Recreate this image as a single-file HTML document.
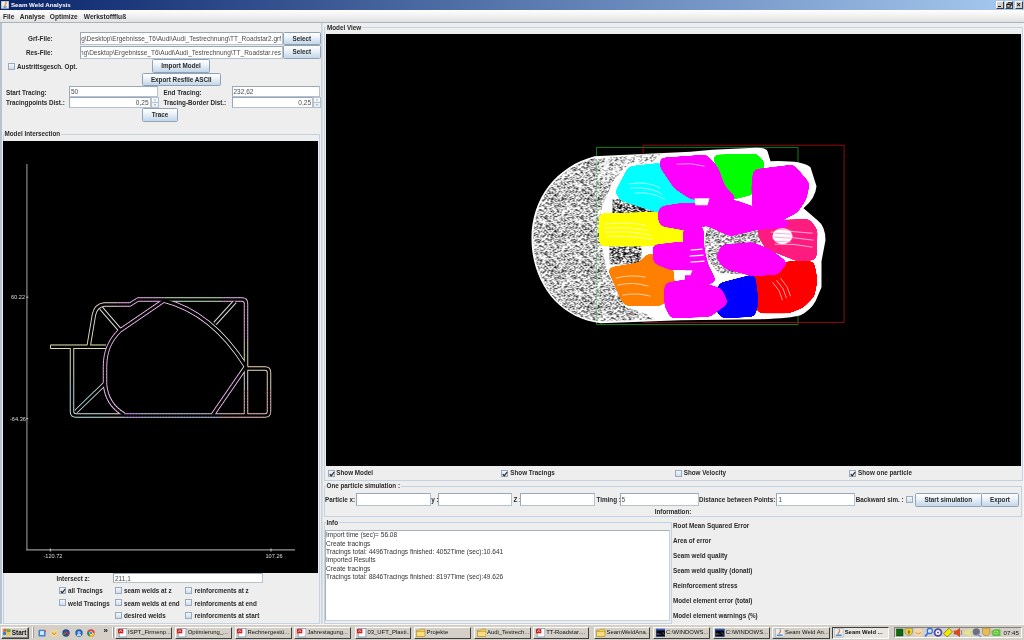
<!DOCTYPE html>
<html><head><meta charset="utf-8">
<style>
*{margin:0;padding:0;box-sizing:border-box}
html,body{width:1024px;height:640px;overflow:hidden;background:#eeeeee;font-family:"Liberation Sans",sans-serif;color:#222}
.a{position:absolute}
.b{font-weight:bold;font-size:6.3px;line-height:8px;white-space:nowrap;color:#2a2a2a;margin-top:0.5px}
.r{font-size:6.3px;line-height:8px;white-space:nowrap;color:#333}
.btn{position:absolute;border:1px solid #8ea2b8;border-radius:1.5px;background:linear-gradient(#ffffff 0%,#eef4fa 35%,#c3d6e9 100%);font-weight:bold;font-size:6.3px;color:#2a2a2a;text-align:center;white-space:nowrap}
.tf{position:absolute;background:#fff;border:1px solid #b4c2d0;border-top-color:#98a8b8;border-left-color:#98a8b8;font-size:6.5px;color:#4a4a4a;white-space:nowrap;overflow:hidden}
.cb{position:absolute;width:7px;height:7px;border:1px solid #9aabbd;background:linear-gradient(#f4f8fc,#cddcec)}
.grp{position:absolute;border:1px solid #c3d3e4}
.gt{position:absolute;background:#eeeeee;font-weight:bold;font-size:6.3px;line-height:8px;color:#2a2a2a;padding:0 1px;white-space:nowrap}
.ck{position:absolute;left:0px;top:0px}
.tb{position:absolute;top:627.2px;height:11.5px;border:1px solid;border-color:#fff #404040 #404040 #fff;background:#d4d0c8;font-size:5.9px;line-height:9.5px;color:#111;white-space:nowrap;overflow:hidden}
.tb .ic{position:absolute;left:1.5px;top:0px;width:9.5px;height:9.5px}
.tb span{position:absolute;left:12px;top:0}
</style></head><body><div style="position:absolute;left:0;top:0;width:1024px;height:640px;will-change:transform;background:#eee">

<!-- title bar -->
<div class="a" style="left:0;top:0;width:1024px;height:9.5px;background:linear-gradient(90deg,#0a246a 0%,#a6caf0 100%)"></div>
<svg class="a" style="left:1.2px;top:0.9px" width="8" height="7.7" viewBox="0 0 8 7.7"><rect x="0.2" y="0.2" width="7.6" height="7.3" fill="#eef1f4" stroke="#b8c0c8" stroke-width="0.4"/><path d="M4.3 0.8 Q6 2.2 4.2 3.6 Q3.3 4.3 4.4 4.9" stroke="#ee8a2a" stroke-width="1.3" fill="none"/><path d="M1.5 5.2 H6.3 Q6.3 6.8 4 6.9 Q1.6 6.8 1.5 5.2Z" fill="#6a94c4"/></svg>
<div class="a b" style="left:10.9px;top:-0.3px;color:#fff;font-size:6.2px;line-height:9px">Seam Weld Analysis</div>
<div class="a" style="left:996px;top:1px;width:8px;height:7.5px;background:#d4d0c8;border:0.5px solid;border-color:#fff #404040 #404040 #fff"></div>
<div class="a" style="left:998.3px;top:6px;width:3.2px;height:1.1px;background:#111"></div>
<div class="a" style="left:1005px;top:1px;width:8px;height:7.5px;background:#d4d0c8;border:0.5px solid;border-color:#fff #404040 #404040 #fff"></div>
<svg class="a" style="left:1005px;top:1px" width="8" height="8" viewBox="0 0 8 8"><path d="M3.2 1.6 H6.4 V4.4 H5.4 M3.2 1.6 V2.6" stroke="#111" stroke-width="0.9" fill="none"/><rect x="1.8" y="3.2" width="3.4" height="3" stroke="#111" stroke-width="0.9" fill="none"/><line x1="1.8" y1="3.5" x2="5.2" y2="3.5" stroke="#111" stroke-width="1"/></svg>
<div class="a" style="left:1014.5px;top:1px;width:8px;height:7.5px;background:#d4d0c8;border:0.5px solid;border-color:#fff #404040 #404040 #fff"></div>
<div class="a" style="left:1015px;top:-0.5px;font-size:7px;line-height:9px;color:#000;font-weight:bold;width:7px;text-align:center">×</div>

<!-- menu bar -->
<div class="a" style="left:0;top:9.5px;width:1024px;height:13.5px;background:linear-gradient(#ffffff,#e2e2e2);border-bottom:1px solid #a9b4bf"></div>
<div class="a b" style="left:3px;top:12px;font-size:6.6px">File</div>
<div class="a b" style="left:19.7px;top:12px;font-size:6.6px">Analyse</div>
<div class="a b" style="left:49.8px;top:12px;font-size:6.6px">Optimize</div>
<div class="a b" style="left:83.8px;top:12px;font-size:6.6px">Werkstofffluß</div>

<!-- window side borders -->
<div class="a" style="left:0;top:23px;width:1.5px;height:601px;background:#b7c3cf"></div>

<!-- LEFT PANEL -->
<div id="left">
<div class="a" style="left:1.5px;top:23px;width:320.5px;height:601px;border-right:1px solid #c9d3de"></div>
<div class="a b" style="left:28px;top:34.5px">Grf-File:</div>
<div class="tf" style="left:79.5px;top:31.5px;width:203px;height:13px;line-height:11px"><span style="position:absolute;right:0.5px;top:0">ing\Desktop\Ergebnisse_T6\Audi\Audi_Testrechnung\TT_Roadstar2.grf</span></div>
<div class="btn" style="left:283px;top:31.5px;width:37.5px;height:13px;line-height:11px">Select</div>
<div class="a b" style="left:26px;top:48px">Res-File:</div>
<div class="tf" style="left:79.5px;top:45.5px;width:203px;height:13px;line-height:11px"><span style="position:absolute;right:0.5px;top:0">ing\Desktop\Ergebnisse_T6\Audi\Audi_Testrechnung\TT_Roadstar.res</span></div>
<div class="btn" style="left:283px;top:45px;width:37.5px;height:13.5px;line-height:11.5px">Select</div>
<div class="cb" style="left:8px;top:62.5px"></div>
<div class="a b" style="left:17px;top:62px">Austrittsgesch. Opt.</div>
<div class="btn" style="left:152px;top:58.5px;width:58px;height:14px;line-height:12px">Import Model</div>
<div class="btn" style="left:142px;top:72.5px;width:78.5px;height:13.5px;line-height:11.5px">Export Resfile ASCII</div>
<div class="a b" style="left:6px;top:88px">Start Tracing:</div>
<div class="tf" style="left:69px;top:86px;width:89px;height:10.5px;line-height:9px;padding-left:1px">50</div>
<div class="a b" style="left:163.5px;top:88px">End Tracing:</div>
<div class="tf" style="left:231.5px;top:86px;width:88.5px;height:10.5px;line-height:9px;padding-left:1px">232,62</div>
<div class="a b" style="left:6px;top:98.5px">Tracingpoints Dist.:</div>
<div class="tf" style="left:69px;top:97px;width:81.5px;height:10.5px;line-height:9px;text-align:right;padding-right:1px">0,25</div>
<div class="a" style="left:150.5px;top:97px;width:8px;height:10.5px;border:1px solid #b4c2d0;background:linear-gradient(#fafcfe,#e6edf5)"></div>
<div class="a" style="left:150.5px;top:101.8px;width:8px;height:0.8px;background:#b4c2d0"></div><svg class="a" style="left:150.5px;top:97px" width="8" height="11" viewBox="0 0 8 11"><path d="M3 3.3 L4 2.3 L5 3.3Z M3 7.6 L4 8.6 L5 7.6Z" fill="#666"/></svg>
<div class="a b" style="left:163.5px;top:98.5px">Tracing-Border Dist.:</div>
<div class="tf" style="left:231.5px;top:97px;width:81.5px;height:10.5px;line-height:9px;text-align:right;padding-right:1px">0,25</div>
<div class="a" style="left:312.5px;top:97px;width:8px;height:10.5px;border:1px solid #b4c2d0;background:linear-gradient(#fafcfe,#e6edf5)"></div>
<div class="a" style="left:312.5px;top:101.8px;width:8px;height:0.8px;background:#b4c2d0"></div><svg class="a" style="left:312.5px;top:97px" width="8" height="11" viewBox="0 0 8 11"><path d="M3 3.3 L4 2.3 L5 3.3Z M3 7.6 L4 8.6 L5 7.6Z" fill="#666"/></svg>
<div class="btn" style="left:142px;top:108px;width:36px;height:13.5px;line-height:11.5px">Trace</div>

<div class="grp" style="left:2.5px;top:134px;width:317.5px;height:489.7px"></div>
<div class="gt" style="left:3.5px;top:130px">Model Intersection</div>
<div class="a" style="left:3px;top:140.5px;width:315px;height:432px;background:#000;overflow:hidden">
<svg width="315" height="432" viewBox="3 140.5 315 432" style="position:absolute;left:0;top:0">
 <line x1="26.9" y1="163.5" x2="26.9" y2="549.4" stroke="#777" stroke-width="1.4"/>
 <line x1="26.2" y1="549.4" x2="295" y2="549.4" stroke="#999" stroke-width="1.4"/>
 <line x1="26.2" y1="296.7" x2="28.3" y2="296.7" stroke="#ccc" stroke-width="1"/>
 <line x1="26.2" y1="418.2" x2="28.3" y2="418.2" stroke="#ccc" stroke-width="1"/>
 <line x1="50.3" y1="548" x2="50.3" y2="551" stroke="#ccc" stroke-width="1"/>
 <line x1="271" y1="548" x2="271" y2="551" stroke="#ccc" stroke-width="1"/>
 <g id="prof" fill="none" stroke-linejoin="round" stroke-linecap="butt"><path d="M72 347 L72 411 Q72 415 76 415 L265 415 Q269 415 269 411 L269 372 Q269 368 265 368 L246 368 L246 303 Q246 299 242 299 L138 299 L130 304 L104 304 Q96 305 94 314 L88.5 346.5" stroke="#dedede" stroke-width="4.4"/><path d="M50.5 346.3 L106 346.3" stroke="#dedede" stroke-width="4.4"/><path d="M164 300 Q212 312 246 366 L213 414 M164 300 L120 330 Q105 344 105 366 L105 384 Q107 404 124 414" stroke="#dedede" stroke-width="4.4"/><path d="M101 307.5 L120 329.5" stroke="#dedede" stroke-width="4.4"/><path d="M235 301 L215 323" stroke="#dedede" stroke-width="4.4"/><path d="M105 383 L76 411" stroke="#dedede" stroke-width="4.4"/><path d="M246 366 L246 415" stroke="#dedede" stroke-width="4.4"/><path d="M117 304 L130 304 L138 299 L165 299" stroke="#ff00ff" stroke-width="4.4" stroke-dasharray="1.6 1.4" opacity="0.4"/><path d="M222 299 L242 299 Q246 299 246 303 L246 340" stroke="#ff00ff" stroke-width="4.4" stroke-dasharray="1.6 1.4" opacity="0.4"/><path d="M164 300 L120 330 Q105 344 105 366 L105 384 Q107 404 124 414 L140 415" stroke="#ff00ff" stroke-width="4.4" stroke-dasharray="1.6 1.4" opacity="0.4"/><path d="M240 374 L213 414" stroke="#ff00ff" stroke-width="4.4" stroke-dasharray="1.6 1.4" opacity="0.4"/><path d="M165 299 L222 299" stroke="#30ff30" stroke-width="4.4" stroke-dasharray="1.6 1.4" opacity="0.4"/><path d="M50.5 346.3 L88 346.3 M72 347 L72 380 M88.5 346.5 L91 333 M246 340 L246 366 M90 346.3 L104 346.3" stroke="#e0e000" stroke-width="4.4" stroke-dasharray="1.6 1.4" opacity="0.4"/><path d="M246 368 L265 368 Q269 368 269 372 L269 390" stroke="#ffa000" stroke-width="4.4" stroke-dasharray="1.6 1.4" opacity="0.4"/><path d="M269 390 L269 411 Q269 415 265 415 L220 415 M246 390 L246 415" stroke="#ff2020" stroke-width="4.4" stroke-dasharray="1.6 1.4" opacity="0.4"/><path d="M125 415 L220 415" stroke="#4040ff" stroke-width="4.4" stroke-dasharray="1.6 1.4" opacity="0.4"/><path d="M72 380 L72 411 Q72 415 76 415 L105 415 M95 392 L80 407" stroke="#20e0e0" stroke-width="4.4" stroke-dasharray="1.6 1.4" opacity="0.4"/><path d="M94 314 Q96 305 104 304 L117 304" stroke="#ff9090" stroke-width="4.4" stroke-dasharray="1.6 1.4" opacity="0.4"/><path d="M72 347 L72 411 Q72 415 76 415 L265 415 Q269 415 269 411 L269 372 Q269 368 265 368 L246 368 L246 303 Q246 299 242 299 L138 299 L130 304 L104 304 Q96 305 94 314 L88.5 346.5" stroke="#000" stroke-width="2.5"/><path d="M50.5 346.3 L106 346.3" stroke="#000" stroke-width="2.5"/><path d="M164 300 Q212 312 246 366 L213 414 M164 300 L120 330 Q105 344 105 366 L105 384 Q107 404 124 414" stroke="#000" stroke-width="2.5"/><path d="M101 307.5 L120 329.5" stroke="#000" stroke-width="2.5"/><path d="M235 301 L215 323" stroke="#000" stroke-width="2.5"/><path d="M105 383 L76 411" stroke="#000" stroke-width="2.5"/><path d="M246 366 L246 415" stroke="#000" stroke-width="2.5"/><path d="M164 300 Q212 312 246 366" stroke="#ff00ff" stroke-width="4.4" stroke-dasharray="0 8 1.5 1.5 1.5 1.5 1.5 1.5 1.5 1.5 1.5 1.5 1.5 1.5 1.5 1.5 1.5 1.5 1.5 1.5 1.5 1.5 1.5 1.5 1.5 1.5 1.5 1.5 1.5 1.5 0 200" opacity="0.4"/><path d="M164 300 Q212 312 246 366" stroke="#000" stroke-width="2.5"/><path d="M50.5 344.5 L50.5 348.1" stroke="#d0d0d0" stroke-width="1"/></g>
</svg>
<div class="a r" style="left:8px;top:152.5px;color:#ddd;font-size:5.6px">60.22</div>
<div class="a r" style="left:7px;top:274px;color:#ddd;font-size:5.6px">-64.36</div>
<div class="a r" style="left:40.5px;top:411px;color:#ddd;font-size:5.6px">-120.72</div>
<div class="a r" style="left:262.5px;top:411px;color:#ddd;font-size:5.6px">107.26</div>
</div>
<div class="a b" style="left:56.5px;top:574.5px">Intersect z:</div>
<div class="tf" style="left:113px;top:572.5px;width:150px;height:10.5px;line-height:9px;padding-left:1px">211,1</div>
<div class="cb" style="left:59px;top:586.5px"><svg class="ck" width="6" height="6" viewBox="0 0 6 6"><path d="M0.8 3.2 L2.2 4.8 L5.2 1" stroke="#222" stroke-width="1.2" fill="none"/></svg></div>
<div class="a b" style="left:68px;top:586.3px">all Tracings</div>
<div class="cb" style="left:59px;top:599.3px"></div>
<div class="a b" style="left:68px;top:599px">weld Tracings</div>
<div class="cb" style="left:115.3px;top:586.5px"></div>
<div class="a b" style="left:124px;top:586.3px">seam welds at z</div>
<div class="cb" style="left:115.3px;top:599.3px"></div>
<div class="a b" style="left:124px;top:599px">seam welds at end</div>
<div class="cb" style="left:115.3px;top:611.8px"></div>
<div class="a b" style="left:124px;top:611.5px">desired welds</div>
<div class="cb" style="left:185.2px;top:586.5px"></div>
<div class="a b" style="left:194.5px;top:586.3px">reinforcments at z</div>
<div class="cb" style="left:185.2px;top:599.3px"></div>
<div class="a b" style="left:194.5px;top:599px">reinforcments at end</div>
<div class="cb" style="left:185.2px;top:611.8px"></div>
<div class="a b" style="left:194.5px;top:611.5px">reinforcments at start</div>
</div>

<!-- RIGHT PANEL -->
<div id="right">
<div class="a" style="left:322px;top:23px;width:1.3px;height:601px;background:#d5dde6"></div>
<div class="grp" style="left:324px;top:27px;width:698.5px;height:453.5px"></div>
<div class="gt" style="left:326px;top:23.5px">Model View</div>
<div class="a" style="left:325.5px;top:33.8px;width:695.5px;height:432px;background:#000;overflow:hidden">
<svg id="mv" width="695.5" height="432" viewBox="325.5 33.8 695.5 432" style="position:absolute;left:0;top:0">
<defs><filter id="goo" x="-20%" y="-20%" width="140%" height="140%"><feGaussianBlur in="SourceGraphic" stdDeviation="2.5" result="b"/><feColorMatrix in="b" type="matrix" values="1 0 0 0 0  0 1 0 0 0  0 0 1 0 0  0 0 0 20 -9" result="g"/><feComposite in="SourceGraphic" in2="g" operator="atop"/></filter><pattern id="spk" width="36" height="36" patternUnits="userSpaceOnUse"><rect width="36" height="36" fill="#fff"/><path d="M0 0h1v1h-1zM1 0h1v1h-1zM5 0h1v1h-1zM7 0h1v1h-1zM10 0h1v1h-1zM14 0h1v1h-1zM15 0h1v1h-1zM16 0h1v1h-1zM32 0h1v1h-1zM3 1h1v1h-1zM28 1h1v1h-1zM30 1h1v1h-1zM4 2h1v1h-1zM5 2h1v1h-1zM13 2h1v1h-1zM23 2h1v1h-1zM27 2h1v1h-1zM32 2h1v1h-1zM6 3h1v1h-1zM21 3h1v1h-1zM24 3h1v1h-1zM28 3h1v1h-1zM7 4h1v1h-1zM9 4h1v1h-1zM24 4h1v1h-1zM25 4h1v1h-1zM9 5h1v1h-1zM17 5h1v1h-1zM23 5h1v1h-1zM32 5h1v1h-1zM33 5h1v1h-1zM17 6h1v1h-1zM19 6h1v1h-1zM29 6h1v1h-1zM8 7h1v1h-1zM11 7h1v1h-1zM12 7h1v1h-1zM21 7h1v1h-1zM23 7h1v1h-1zM24 7h1v1h-1zM27 7h1v1h-1zM28 7h1v1h-1zM34 7h1v1h-1zM0 8h1v1h-1zM9 8h1v1h-1zM19 8h1v1h-1zM28 8h1v1h-1zM33 8h1v1h-1zM35 8h1v1h-1zM6 9h1v1h-1zM12 9h1v1h-1zM14 9h1v1h-1zM5 10h1v1h-1zM7 10h1v1h-1zM14 10h1v1h-1zM23 10h1v1h-1zM29 10h1v1h-1zM32 10h1v1h-1zM3 11h1v1h-1zM9 11h1v1h-1zM15 11h1v1h-1zM18 11h1v1h-1zM26 11h1v1h-1zM31 11h1v1h-1zM35 11h1v1h-1zM9 12h1v1h-1zM11 12h1v1h-1zM25 12h1v1h-1zM35 12h1v1h-1zM7 13h1v1h-1zM8 13h1v1h-1zM9 13h1v1h-1zM12 13h1v1h-1zM17 13h1v1h-1zM31 13h1v1h-1zM4 14h1v1h-1zM5 14h1v1h-1zM14 14h1v1h-1zM15 14h1v1h-1zM17 14h1v1h-1zM25 14h1v1h-1zM33 14h1v1h-1zM0 15h1v1h-1zM3 15h1v1h-1zM6 15h1v1h-1zM13 15h1v1h-1zM14 15h1v1h-1zM15 15h1v1h-1zM19 15h1v1h-1zM24 15h1v1h-1zM26 15h1v1h-1zM34 15h1v1h-1zM6 16h1v1h-1zM24 16h1v1h-1zM27 16h1v1h-1zM4 17h1v1h-1zM21 17h1v1h-1zM22 17h1v1h-1zM29 17h1v1h-1zM8 18h1v1h-1zM9 18h1v1h-1zM11 18h1v1h-1zM12 18h1v1h-1zM14 18h1v1h-1zM22 18h1v1h-1zM24 18h1v1h-1zM25 18h1v1h-1zM31 18h1v1h-1zM32 18h1v1h-1zM0 19h1v1h-1zM4 19h1v1h-1zM7 19h1v1h-1zM11 19h1v1h-1zM15 19h1v1h-1zM18 19h1v1h-1zM21 19h1v1h-1zM23 19h1v1h-1zM25 19h1v1h-1zM29 19h1v1h-1zM30 19h1v1h-1zM2 20h1v1h-1zM7 20h1v1h-1zM14 20h1v1h-1zM18 20h1v1h-1zM21 20h1v1h-1zM33 20h1v1h-1zM10 21h1v1h-1zM15 21h1v1h-1zM23 21h1v1h-1zM28 21h1v1h-1zM6 22h1v1h-1zM24 22h1v1h-1zM5 23h1v1h-1zM7 23h1v1h-1zM10 23h1v1h-1zM15 23h1v1h-1zM17 23h1v1h-1zM19 23h1v1h-1zM31 23h1v1h-1zM33 23h1v1h-1zM34 23h1v1h-1zM3 24h1v1h-1zM18 24h1v1h-1zM24 24h1v1h-1zM30 24h1v1h-1zM35 24h1v1h-1zM2 25h1v1h-1zM10 25h1v1h-1zM14 25h1v1h-1zM16 25h1v1h-1zM17 25h1v1h-1zM20 25h1v1h-1zM22 25h1v1h-1zM33 25h1v1h-1zM34 25h1v1h-1zM19 26h1v1h-1zM22 26h1v1h-1zM23 26h1v1h-1zM32 26h1v1h-1zM34 26h1v1h-1zM4 28h1v1h-1zM5 28h1v1h-1zM10 28h1v1h-1zM25 28h1v1h-1zM0 29h1v1h-1zM16 29h1v1h-1zM21 29h1v1h-1zM35 29h1v1h-1zM1 30h1v1h-1zM12 30h1v1h-1zM17 30h1v1h-1zM10 31h1v1h-1zM11 31h1v1h-1zM13 31h1v1h-1zM17 31h1v1h-1zM28 31h1v1h-1zM33 31h1v1h-1zM4 32h1v1h-1zM20 32h1v1h-1zM25 32h1v1h-1zM3 33h1v1h-1zM9 33h1v1h-1zM14 33h1v1h-1zM30 33h1v1h-1zM33 33h1v1h-1zM1 34h1v1h-1zM12 34h1v1h-1zM20 34h1v1h-1zM24 34h1v1h-1zM25 34h1v1h-1zM26 34h1v1h-1zM5 35h1v1h-1zM6 35h1v1h-1zM17 35h1v1h-1zM30 35h1v1h-1z" fill="#222"/><path d="M0 1h1v1h-1zM4 1h1v1h-1zM5 1h1v1h-1zM6 1h1v1h-1zM13 1h1v1h-1zM24 1h1v1h-1zM26 1h1v1h-1zM29 1h1v1h-1zM31 1h1v1h-1zM32 1h1v1h-1zM33 1h1v1h-1zM1 2h1v1h-1zM7 2h1v1h-1zM9 2h1v1h-1zM10 2h1v1h-1zM20 2h1v1h-1zM21 2h1v1h-1zM34 2h1v1h-1zM2 3h1v1h-1zM19 3h1v1h-1zM8 4h1v1h-1zM16 4h1v1h-1zM22 4h1v1h-1zM5 5h1v1h-1zM11 5h1v1h-1zM19 5h1v1h-1zM16 6h1v1h-1zM18 6h1v1h-1zM21 6h1v1h-1zM26 6h1v1h-1zM30 6h1v1h-1zM33 6h1v1h-1zM35 6h1v1h-1zM0 7h1v1h-1zM1 7h1v1h-1zM10 7h1v1h-1zM31 7h1v1h-1zM1 8h1v1h-1zM4 8h1v1h-1zM6 8h1v1h-1zM12 8h1v1h-1zM13 8h1v1h-1zM23 8h1v1h-1zM0 9h1v1h-1zM1 9h1v1h-1zM5 9h1v1h-1zM7 9h1v1h-1zM8 9h1v1h-1zM8 10h1v1h-1zM27 10h1v1h-1zM0 11h1v1h-1zM1 11h1v1h-1zM6 11h1v1h-1zM11 11h1v1h-1zM20 11h1v1h-1zM25 11h1v1h-1zM27 11h1v1h-1zM30 11h1v1h-1zM33 11h1v1h-1zM2 12h1v1h-1zM3 12h1v1h-1zM6 12h1v1h-1zM12 12h1v1h-1zM14 12h1v1h-1zM28 12h1v1h-1zM29 12h1v1h-1zM33 12h1v1h-1zM4 13h1v1h-1zM10 13h1v1h-1zM14 13h1v1h-1zM16 13h1v1h-1zM24 13h1v1h-1zM22 14h1v1h-1zM28 14h1v1h-1zM29 14h1v1h-1zM34 14h1v1h-1zM9 15h1v1h-1zM10 15h1v1h-1zM16 15h1v1h-1zM23 15h1v1h-1zM28 15h1v1h-1zM3 16h1v1h-1zM7 16h1v1h-1zM12 16h1v1h-1zM15 16h1v1h-1zM18 16h1v1h-1zM30 16h1v1h-1zM34 16h1v1h-1zM8 17h1v1h-1zM11 17h1v1h-1zM16 17h1v1h-1zM26 17h1v1h-1zM30 17h1v1h-1zM34 17h1v1h-1zM4 18h1v1h-1zM6 18h1v1h-1zM17 18h1v1h-1zM19 18h1v1h-1zM21 18h1v1h-1zM33 18h1v1h-1zM2 19h1v1h-1zM3 19h1v1h-1zM12 19h1v1h-1zM13 19h1v1h-1zM22 19h1v1h-1zM27 19h1v1h-1zM0 20h1v1h-1zM3 20h1v1h-1zM17 20h1v1h-1zM20 20h1v1h-1zM28 20h1v1h-1zM32 20h1v1h-1zM11 21h1v1h-1zM12 21h1v1h-1zM27 21h1v1h-1zM31 21h1v1h-1zM33 21h1v1h-1zM35 21h1v1h-1zM5 22h1v1h-1zM11 22h1v1h-1zM13 22h1v1h-1zM21 22h1v1h-1zM22 22h1v1h-1zM0 23h1v1h-1zM8 23h1v1h-1zM11 23h1v1h-1zM22 23h1v1h-1zM8 24h1v1h-1zM13 24h1v1h-1zM20 24h1v1h-1zM32 24h1v1h-1zM1 25h1v1h-1zM4 26h1v1h-1zM5 26h1v1h-1zM6 26h1v1h-1zM8 26h1v1h-1zM14 26h1v1h-1zM21 26h1v1h-1zM24 26h1v1h-1zM27 26h1v1h-1zM4 27h1v1h-1zM5 27h1v1h-1zM11 27h1v1h-1zM15 27h1v1h-1zM20 27h1v1h-1zM25 27h1v1h-1zM29 27h1v1h-1zM9 28h1v1h-1zM16 28h1v1h-1zM18 28h1v1h-1zM6 29h1v1h-1zM9 29h1v1h-1zM11 29h1v1h-1zM17 29h1v1h-1zM19 29h1v1h-1zM25 29h1v1h-1zM30 29h1v1h-1zM0 30h1v1h-1zM2 30h1v1h-1zM6 30h1v1h-1zM10 30h1v1h-1zM21 30h1v1h-1zM28 30h1v1h-1zM35 30h1v1h-1zM2 31h1v1h-1zM3 31h1v1h-1zM8 31h1v1h-1zM16 31h1v1h-1zM18 31h1v1h-1zM7 32h1v1h-1zM12 32h1v1h-1zM15 32h1v1h-1zM27 32h1v1h-1zM31 32h1v1h-1zM35 32h1v1h-1zM6 33h1v1h-1zM13 33h1v1h-1zM15 33h1v1h-1zM0 34h1v1h-1zM2 34h1v1h-1zM13 34h1v1h-1zM17 34h1v1h-1zM19 34h1v1h-1zM10 35h1v1h-1zM12 35h1v1h-1zM19 35h1v1h-1zM24 35h1v1h-1zM32 35h1v1h-1zM34 35h1v1h-1z" fill="#777"/><path d="M2 0h1v1h-1zM3 0h1v1h-1zM4 0h1v1h-1zM9 0h1v1h-1zM13 0h1v1h-1zM21 0h1v1h-1zM23 0h1v1h-1zM35 0h1v1h-1zM9 1h1v1h-1zM12 1h1v1h-1zM20 1h1v1h-1zM21 1h1v1h-1zM27 1h1v1h-1zM6 2h1v1h-1zM18 2h1v1h-1zM26 2h1v1h-1zM12 3h1v1h-1zM13 3h1v1h-1zM15 3h1v1h-1zM16 3h1v1h-1zM31 3h1v1h-1zM1 4h1v1h-1zM13 4h1v1h-1zM14 4h1v1h-1zM15 4h1v1h-1zM20 4h1v1h-1zM21 4h1v1h-1zM26 4h1v1h-1zM29 4h1v1h-1zM32 4h1v1h-1zM34 4h1v1h-1zM6 5h1v1h-1zM7 5h1v1h-1zM8 5h1v1h-1zM10 5h1v1h-1zM27 5h1v1h-1zM14 6h1v1h-1zM24 6h1v1h-1zM31 6h1v1h-1zM2 7h1v1h-1zM5 7h1v1h-1zM17 7h1v1h-1zM30 7h1v1h-1zM33 7h1v1h-1zM14 8h1v1h-1zM18 8h1v1h-1zM21 8h1v1h-1zM26 8h1v1h-1zM29 8h1v1h-1zM10 9h1v1h-1zM13 9h1v1h-1zM15 9h1v1h-1zM16 9h1v1h-1zM19 9h1v1h-1zM25 9h1v1h-1zM27 9h1v1h-1zM32 9h1v1h-1zM0 10h1v1h-1zM6 10h1v1h-1zM19 10h1v1h-1zM24 10h1v1h-1zM33 10h1v1h-1zM35 10h1v1h-1zM5 11h1v1h-1zM8 11h1v1h-1zM12 11h1v1h-1zM19 11h1v1h-1zM21 11h1v1h-1zM29 11h1v1h-1zM17 12h1v1h-1zM18 12h1v1h-1zM21 12h1v1h-1zM22 12h1v1h-1zM30 12h1v1h-1zM32 12h1v1h-1zM1 13h1v1h-1zM11 13h1v1h-1zM20 13h1v1h-1zM26 13h1v1h-1zM1 14h1v1h-1zM27 14h1v1h-1zM1 15h1v1h-1zM17 15h1v1h-1zM22 15h1v1h-1zM2 16h1v1h-1zM16 16h1v1h-1zM22 16h1v1h-1zM31 16h1v1h-1zM32 16h1v1h-1zM35 16h1v1h-1zM5 17h1v1h-1zM12 17h1v1h-1zM13 17h1v1h-1zM1 18h1v1h-1zM5 18h1v1h-1zM10 18h1v1h-1zM23 18h1v1h-1zM27 18h1v1h-1zM29 18h1v1h-1zM34 18h1v1h-1zM10 19h1v1h-1zM16 19h1v1h-1zM33 19h1v1h-1zM1 20h1v1h-1zM10 20h1v1h-1zM11 20h1v1h-1zM19 20h1v1h-1zM24 20h1v1h-1zM2 21h1v1h-1zM16 21h1v1h-1zM17 21h1v1h-1zM19 21h1v1h-1zM0 22h1v1h-1zM7 22h1v1h-1zM12 22h1v1h-1zM19 22h1v1h-1zM26 22h1v1h-1zM28 22h1v1h-1zM29 22h1v1h-1zM9 23h1v1h-1zM13 23h1v1h-1zM24 23h1v1h-1zM32 23h1v1h-1zM0 24h1v1h-1zM7 24h1v1h-1zM9 24h1v1h-1zM10 24h1v1h-1zM19 24h1v1h-1zM25 24h1v1h-1zM31 24h1v1h-1zM3 25h1v1h-1zM15 25h1v1h-1zM18 25h1v1h-1zM27 25h1v1h-1zM29 25h1v1h-1zM31 25h1v1h-1zM35 25h1v1h-1zM0 26h1v1h-1zM3 26h1v1h-1zM13 26h1v1h-1zM15 26h1v1h-1zM17 26h1v1h-1zM18 26h1v1h-1zM25 26h1v1h-1zM35 26h1v1h-1zM12 27h1v1h-1zM14 27h1v1h-1zM16 27h1v1h-1zM33 27h1v1h-1zM6 28h1v1h-1zM8 28h1v1h-1zM14 28h1v1h-1zM23 28h1v1h-1zM31 28h1v1h-1zM3 29h1v1h-1zM23 29h1v1h-1zM31 29h1v1h-1zM32 29h1v1h-1zM34 29h1v1h-1zM18 30h1v1h-1zM27 30h1v1h-1zM34 30h1v1h-1zM5 31h1v1h-1zM20 31h1v1h-1zM27 31h1v1h-1zM17 32h1v1h-1zM18 32h1v1h-1zM24 32h1v1h-1zM26 32h1v1h-1zM0 33h1v1h-1zM8 33h1v1h-1zM10 33h1v1h-1zM26 33h1v1h-1zM29 33h1v1h-1zM32 33h1v1h-1zM23 34h1v1h-1zM27 34h1v1h-1zM28 34h1v1h-1zM31 34h1v1h-1zM35 34h1v1h-1zM14 35h1v1h-1zM18 35h1v1h-1zM23 35h1v1h-1zM25 35h1v1h-1zM28 35h1v1h-1z" fill="#999"/></pattern><pattern id="spk2" width="30" height="30" patternUnits="userSpaceOnUse"><rect width="30" height="30" fill="#fff"/><path d="M3 0h1v1h-1zM4 0h1v1h-1zM5 0h1v1h-1zM6 0h1v1h-1zM10 0h1v1h-1zM11 0h1v1h-1zM13 0h1v1h-1zM14 0h1v1h-1zM15 0h1v1h-1zM17 0h1v1h-1zM20 0h1v1h-1zM21 0h1v1h-1zM23 0h1v1h-1zM24 0h1v1h-1zM27 0h1v1h-1zM28 0h1v1h-1zM29 0h1v1h-1zM0 1h1v1h-1zM1 1h1v1h-1zM2 1h1v1h-1zM3 1h1v1h-1zM4 1h1v1h-1zM6 1h1v1h-1zM7 1h1v1h-1zM8 1h1v1h-1zM11 1h1v1h-1zM12 1h1v1h-1zM13 1h1v1h-1zM17 1h1v1h-1zM18 1h1v1h-1zM19 1h1v1h-1zM20 1h1v1h-1zM22 1h1v1h-1zM27 1h1v1h-1zM2 2h1v1h-1zM4 2h1v1h-1zM6 2h1v1h-1zM9 2h1v1h-1zM11 2h1v1h-1zM12 2h1v1h-1zM13 2h1v1h-1zM16 2h1v1h-1zM18 2h1v1h-1zM19 2h1v1h-1zM20 2h1v1h-1zM21 2h1v1h-1zM22 2h1v1h-1zM25 2h1v1h-1zM27 2h1v1h-1zM28 2h1v1h-1zM0 3h1v1h-1zM3 3h1v1h-1zM5 3h1v1h-1zM6 3h1v1h-1zM7 3h1v1h-1zM8 3h1v1h-1zM10 3h1v1h-1zM12 3h1v1h-1zM13 3h1v1h-1zM14 3h1v1h-1zM15 3h1v1h-1zM16 3h1v1h-1zM17 3h1v1h-1zM18 3h1v1h-1zM19 3h1v1h-1zM25 3h1v1h-1zM27 3h1v1h-1zM0 4h1v1h-1zM1 4h1v1h-1zM2 4h1v1h-1zM3 4h1v1h-1zM4 4h1v1h-1zM6 4h1v1h-1zM7 4h1v1h-1zM8 4h1v1h-1zM9 4h1v1h-1zM10 4h1v1h-1zM12 4h1v1h-1zM13 4h1v1h-1zM18 4h1v1h-1zM23 4h1v1h-1zM29 4h1v1h-1zM2 5h1v1h-1zM3 5h1v1h-1zM4 5h1v1h-1zM5 5h1v1h-1zM6 5h1v1h-1zM9 5h1v1h-1zM11 5h1v1h-1zM15 5h1v1h-1zM18 5h1v1h-1zM20 5h1v1h-1zM23 5h1v1h-1zM24 5h1v1h-1zM25 5h1v1h-1zM26 5h1v1h-1zM27 5h1v1h-1zM28 5h1v1h-1zM1 6h1v1h-1zM3 6h1v1h-1zM4 6h1v1h-1zM5 6h1v1h-1zM6 6h1v1h-1zM8 6h1v1h-1zM9 6h1v1h-1zM11 6h1v1h-1zM13 6h1v1h-1zM16 6h1v1h-1zM18 6h1v1h-1zM24 6h1v1h-1zM26 6h1v1h-1zM29 6h1v1h-1zM1 7h1v1h-1zM3 7h1v1h-1zM4 7h1v1h-1zM5 7h1v1h-1zM13 7h1v1h-1zM18 7h1v1h-1zM19 7h1v1h-1zM20 7h1v1h-1zM21 7h1v1h-1zM22 7h1v1h-1zM23 7h1v1h-1zM24 7h1v1h-1zM25 7h1v1h-1zM29 7h1v1h-1zM1 8h1v1h-1zM5 8h1v1h-1zM6 8h1v1h-1zM8 8h1v1h-1zM9 8h1v1h-1zM10 8h1v1h-1zM12 8h1v1h-1zM13 8h1v1h-1zM14 8h1v1h-1zM15 8h1v1h-1zM17 8h1v1h-1zM19 8h1v1h-1zM21 8h1v1h-1zM24 8h1v1h-1zM29 8h1v1h-1zM0 9h1v1h-1zM8 9h1v1h-1zM9 9h1v1h-1zM10 9h1v1h-1zM11 9h1v1h-1zM12 9h1v1h-1zM15 9h1v1h-1zM17 9h1v1h-1zM18 9h1v1h-1zM22 9h1v1h-1zM23 9h1v1h-1zM24 9h1v1h-1zM26 9h1v1h-1zM28 9h1v1h-1zM29 9h1v1h-1zM1 10h1v1h-1zM4 10h1v1h-1zM6 10h1v1h-1zM12 10h1v1h-1zM13 10h1v1h-1zM14 10h1v1h-1zM17 10h1v1h-1zM21 10h1v1h-1zM23 10h1v1h-1zM29 10h1v1h-1zM0 11h1v1h-1zM3 11h1v1h-1zM8 11h1v1h-1zM11 11h1v1h-1zM12 11h1v1h-1zM15 11h1v1h-1zM17 11h1v1h-1zM18 11h1v1h-1zM20 11h1v1h-1zM23 11h1v1h-1zM29 11h1v1h-1zM0 12h1v1h-1zM1 12h1v1h-1zM2 12h1v1h-1zM3 12h1v1h-1zM7 12h1v1h-1zM10 12h1v1h-1zM11 12h1v1h-1zM12 12h1v1h-1zM15 12h1v1h-1zM16 12h1v1h-1zM17 12h1v1h-1zM21 12h1v1h-1zM22 12h1v1h-1zM23 12h1v1h-1zM24 12h1v1h-1zM25 12h1v1h-1zM27 12h1v1h-1zM28 12h1v1h-1zM1 13h1v1h-1zM3 13h1v1h-1zM4 13h1v1h-1zM5 13h1v1h-1zM6 13h1v1h-1zM7 13h1v1h-1zM8 13h1v1h-1zM9 13h1v1h-1zM11 13h1v1h-1zM13 13h1v1h-1zM14 13h1v1h-1zM15 13h1v1h-1zM17 13h1v1h-1zM18 13h1v1h-1zM19 13h1v1h-1zM23 13h1v1h-1zM24 13h1v1h-1zM25 13h1v1h-1zM26 13h1v1h-1zM27 13h1v1h-1zM29 13h1v1h-1zM4 14h1v1h-1zM6 14h1v1h-1zM7 14h1v1h-1zM9 14h1v1h-1zM12 14h1v1h-1zM13 14h1v1h-1zM17 14h1v1h-1zM19 14h1v1h-1zM22 14h1v1h-1zM23 14h1v1h-1zM24 14h1v1h-1zM25 14h1v1h-1zM27 14h1v1h-1zM29 14h1v1h-1zM2 15h1v1h-1zM3 15h1v1h-1zM4 15h1v1h-1zM5 15h1v1h-1zM6 15h1v1h-1zM7 15h1v1h-1zM9 15h1v1h-1zM11 15h1v1h-1zM12 15h1v1h-1zM17 15h1v1h-1zM19 15h1v1h-1zM23 15h1v1h-1zM0 16h1v1h-1zM1 16h1v1h-1zM3 16h1v1h-1zM6 16h1v1h-1zM7 16h1v1h-1zM8 16h1v1h-1zM13 16h1v1h-1zM15 16h1v1h-1zM16 16h1v1h-1zM17 16h1v1h-1zM18 16h1v1h-1zM22 16h1v1h-1zM23 16h1v1h-1zM24 16h1v1h-1zM26 16h1v1h-1zM28 16h1v1h-1zM29 16h1v1h-1zM0 17h1v1h-1zM2 17h1v1h-1zM4 17h1v1h-1zM7 17h1v1h-1zM9 17h1v1h-1zM11 17h1v1h-1zM12 17h1v1h-1zM13 17h1v1h-1zM15 17h1v1h-1zM17 17h1v1h-1zM18 17h1v1h-1zM19 17h1v1h-1zM20 17h1v1h-1zM21 17h1v1h-1zM24 17h1v1h-1zM27 17h1v1h-1zM29 17h1v1h-1zM0 18h1v1h-1zM5 18h1v1h-1zM6 18h1v1h-1zM7 18h1v1h-1zM9 18h1v1h-1zM14 18h1v1h-1zM16 18h1v1h-1zM18 18h1v1h-1zM19 18h1v1h-1zM21 18h1v1h-1zM22 18h1v1h-1zM25 18h1v1h-1zM0 19h1v1h-1zM1 19h1v1h-1zM3 19h1v1h-1zM5 19h1v1h-1zM7 19h1v1h-1zM8 19h1v1h-1zM11 19h1v1h-1zM12 19h1v1h-1zM16 19h1v1h-1zM17 19h1v1h-1zM19 19h1v1h-1zM21 19h1v1h-1zM26 19h1v1h-1zM28 19h1v1h-1zM0 20h1v1h-1zM1 20h1v1h-1zM5 20h1v1h-1zM7 20h1v1h-1zM10 20h1v1h-1zM12 20h1v1h-1zM13 20h1v1h-1zM15 20h1v1h-1zM17 20h1v1h-1zM19 20h1v1h-1zM20 20h1v1h-1zM27 20h1v1h-1zM1 21h1v1h-1zM4 21h1v1h-1zM6 21h1v1h-1zM7 21h1v1h-1zM8 21h1v1h-1zM11 21h1v1h-1zM13 21h1v1h-1zM19 21h1v1h-1zM22 21h1v1h-1zM23 21h1v1h-1zM26 21h1v1h-1zM27 21h1v1h-1zM28 21h1v1h-1zM0 22h1v1h-1zM1 22h1v1h-1zM3 22h1v1h-1zM4 22h1v1h-1zM5 22h1v1h-1zM7 22h1v1h-1zM12 22h1v1h-1zM14 22h1v1h-1zM16 22h1v1h-1zM19 22h1v1h-1zM26 22h1v1h-1zM29 22h1v1h-1zM1 23h1v1h-1zM3 23h1v1h-1zM6 23h1v1h-1zM7 23h1v1h-1zM8 23h1v1h-1zM10 23h1v1h-1zM11 23h1v1h-1zM14 23h1v1h-1zM15 23h1v1h-1zM16 23h1v1h-1zM18 23h1v1h-1zM23 23h1v1h-1zM25 23h1v1h-1zM27 23h1v1h-1zM1 24h1v1h-1zM2 24h1v1h-1zM10 24h1v1h-1zM11 24h1v1h-1zM12 24h1v1h-1zM14 24h1v1h-1zM16 24h1v1h-1zM17 24h1v1h-1zM18 24h1v1h-1zM20 24h1v1h-1zM21 24h1v1h-1zM23 24h1v1h-1zM27 24h1v1h-1zM28 24h1v1h-1zM2 25h1v1h-1zM3 25h1v1h-1zM4 25h1v1h-1zM7 25h1v1h-1zM10 25h1v1h-1zM12 25h1v1h-1zM17 25h1v1h-1zM19 25h1v1h-1zM20 25h1v1h-1zM21 25h1v1h-1zM23 25h1v1h-1zM26 25h1v1h-1zM28 25h1v1h-1zM1 26h1v1h-1zM2 26h1v1h-1zM3 26h1v1h-1zM6 26h1v1h-1zM7 26h1v1h-1zM10 26h1v1h-1zM12 26h1v1h-1zM14 26h1v1h-1zM16 26h1v1h-1zM17 26h1v1h-1zM19 26h1v1h-1zM20 26h1v1h-1zM21 26h1v1h-1zM24 26h1v1h-1zM26 26h1v1h-1zM3 27h1v1h-1zM4 27h1v1h-1zM5 27h1v1h-1zM7 27h1v1h-1zM8 27h1v1h-1zM9 27h1v1h-1zM10 27h1v1h-1zM12 27h1v1h-1zM14 27h1v1h-1zM17 27h1v1h-1zM18 27h1v1h-1zM19 27h1v1h-1zM20 27h1v1h-1zM22 27h1v1h-1zM23 27h1v1h-1zM24 27h1v1h-1zM26 27h1v1h-1zM27 27h1v1h-1zM28 27h1v1h-1zM29 27h1v1h-1zM0 28h1v1h-1zM2 28h1v1h-1zM3 28h1v1h-1zM4 28h1v1h-1zM6 28h1v1h-1zM8 28h1v1h-1zM9 28h1v1h-1zM10 28h1v1h-1zM11 28h1v1h-1zM12 28h1v1h-1zM13 28h1v1h-1zM16 28h1v1h-1zM18 28h1v1h-1zM19 28h1v1h-1zM20 28h1v1h-1zM24 28h1v1h-1zM25 28h1v1h-1zM26 28h1v1h-1zM29 28h1v1h-1zM1 29h1v1h-1zM5 29h1v1h-1zM8 29h1v1h-1zM9 29h1v1h-1zM10 29h1v1h-1zM11 29h1v1h-1zM12 29h1v1h-1zM13 29h1v1h-1zM14 29h1v1h-1zM23 29h1v1h-1zM25 29h1v1h-1zM26 29h1v1h-1z" fill="#111"/></pattern><pattern id="spk3" width="30" height="30" patternUnits="userSpaceOnUse"><rect width="30" height="30" fill="#fff"/><path d="M9 0h1v1h-1zM11 0h1v1h-1zM27 0h1v1h-1zM12 1h1v1h-1zM17 1h1v1h-1zM18 1h1v1h-1zM4 2h1v1h-1zM6 2h1v1h-1zM7 2h1v1h-1zM14 2h1v1h-1zM15 2h1v1h-1zM16 2h1v1h-1zM25 2h1v1h-1zM0 3h1v1h-1zM2 3h1v1h-1zM9 3h1v1h-1zM13 3h1v1h-1zM15 3h1v1h-1zM21 3h1v1h-1zM26 3h1v1h-1zM4 4h1v1h-1zM8 4h1v1h-1zM11 4h1v1h-1zM12 4h1v1h-1zM14 4h1v1h-1zM17 4h1v1h-1zM19 4h1v1h-1zM22 4h1v1h-1zM28 4h1v1h-1zM4 5h1v1h-1zM10 5h1v1h-1zM21 5h1v1h-1zM22 5h1v1h-1zM6 6h1v1h-1zM8 6h1v1h-1zM10 6h1v1h-1zM21 6h1v1h-1zM25 6h1v1h-1zM1 7h1v1h-1zM3 7h1v1h-1zM10 7h1v1h-1zM13 7h1v1h-1zM15 7h1v1h-1zM16 7h1v1h-1zM19 7h1v1h-1zM20 7h1v1h-1zM23 7h1v1h-1zM24 7h1v1h-1zM3 8h1v1h-1zM16 8h1v1h-1zM20 8h1v1h-1zM25 8h1v1h-1zM0 9h1v1h-1zM3 9h1v1h-1zM8 9h1v1h-1zM11 9h1v1h-1zM15 9h1v1h-1zM16 9h1v1h-1zM17 9h1v1h-1zM23 9h1v1h-1zM28 9h1v1h-1zM2 10h1v1h-1zM10 10h1v1h-1zM14 10h1v1h-1zM15 10h1v1h-1zM20 10h1v1h-1zM21 10h1v1h-1zM23 10h1v1h-1zM29 10h1v1h-1zM1 11h1v1h-1zM2 11h1v1h-1zM3 11h1v1h-1zM9 11h1v1h-1zM21 11h1v1h-1zM0 12h1v1h-1zM12 12h1v1h-1zM22 12h1v1h-1zM28 12h1v1h-1zM10 13h1v1h-1zM11 13h1v1h-1zM15 13h1v1h-1zM27 13h1v1h-1zM9 14h1v1h-1zM10 14h1v1h-1zM11 14h1v1h-1zM16 14h1v1h-1zM17 14h1v1h-1zM19 14h1v1h-1zM2 15h1v1h-1zM9 15h1v1h-1zM11 15h1v1h-1zM12 15h1v1h-1zM14 15h1v1h-1zM18 15h1v1h-1zM27 15h1v1h-1zM1 16h1v1h-1zM2 16h1v1h-1zM21 16h1v1h-1zM24 16h1v1h-1zM25 16h1v1h-1zM9 17h1v1h-1zM14 17h1v1h-1zM19 17h1v1h-1zM20 17h1v1h-1zM8 18h1v1h-1zM11 18h1v1h-1zM21 18h1v1h-1zM29 18h1v1h-1zM2 19h1v1h-1zM9 19h1v1h-1zM11 19h1v1h-1zM20 19h1v1h-1zM21 19h1v1h-1zM4 20h1v1h-1zM6 20h1v1h-1zM19 20h1v1h-1zM27 20h1v1h-1zM15 21h1v1h-1zM26 21h1v1h-1zM29 21h1v1h-1zM6 22h1v1h-1zM10 22h1v1h-1zM23 22h1v1h-1zM24 22h1v1h-1zM25 22h1v1h-1zM26 22h1v1h-1zM28 22h1v1h-1zM5 23h1v1h-1zM8 23h1v1h-1zM19 23h1v1h-1zM24 23h1v1h-1zM26 23h1v1h-1zM29 23h1v1h-1zM2 24h1v1h-1zM5 24h1v1h-1zM6 24h1v1h-1zM10 24h1v1h-1zM12 24h1v1h-1zM17 24h1v1h-1zM19 24h1v1h-1zM20 24h1v1h-1zM22 24h1v1h-1zM29 24h1v1h-1zM15 25h1v1h-1zM17 25h1v1h-1zM20 25h1v1h-1zM28 25h1v1h-1zM29 25h1v1h-1zM11 26h1v1h-1zM15 26h1v1h-1zM22 26h1v1h-1zM23 26h1v1h-1zM1 27h1v1h-1zM5 27h1v1h-1zM9 27h1v1h-1zM12 27h1v1h-1zM14 27h1v1h-1zM22 27h1v1h-1zM28 27h1v1h-1zM1 28h1v1h-1zM5 28h1v1h-1zM10 28h1v1h-1zM14 28h1v1h-1zM16 28h1v1h-1zM17 28h1v1h-1zM28 28h1v1h-1zM5 29h1v1h-1zM9 29h1v1h-1zM10 29h1v1h-1zM11 29h1v1h-1zM14 29h1v1h-1zM16 29h1v1h-1zM20 29h1v1h-1zM26 29h1v1h-1z" fill="#333"/></pattern></defs>
<path d="M596 147.2 L797.5 147.2 L797.5 324.3 L596 324.3 Z" fill="none" stroke="#1a8a1a" stroke-width="0.9"/>
<path d="M642.6 145 L843.6 145 L843.6 322.2 L642.6 322.2 Z" fill="none" stroke="#a01010" stroke-width="0.9"/>
<path d="M594 156 C556 166 531 198 531 238 C531 282 558 318 600 323 L680 320 L760 319 Q790 318 800 315 Q810 310 815 301 L821 287 L821 261 L825 240 Q825 226 817 220 L803 208 Q815 198 816 186 L810 167 Q802 160 770 161 L767 151 Q765 147 755 147.5 L712 149.5 L690 151.5 Z" fill="#fff"/>
<path d="M594 158 C556 168 532.8 199.5 532.8 238 C532.8 282 559 316.5 600 321.3 L655 319 Q645 312 625 307 L620 298 L606 270 Q603 255 600 240 L600 214 Q603 200 608.5 191 Q612 178 626 163 L628 158.5 Z" fill="url(#spk)"/>
<path d="M597 158 L640 154.5 L662 153.5 L650 163 L628 164 L618 175 L603 185 Z" fill="url(#spk3)" opacity="0.8"/>
<path d="M612 199 L655 198 L657 214 L612 214 Z" fill="url(#spk2)"/>
<path d="M609 246 L641 246 L641 264 L609 264 Z" fill="url(#spk2)"/>
<path d="M709 221 L728 236 L758 230 L760 245 L758 273 L738 274 L719 273 Q706 262 704.5 247 Q704 232 709 221 Z" fill="url(#spk)"/>
<polygon points="618,192 630,169 657,166 680,170 693,190 691,204 660,210 622,198" fill="#00ffff" stroke="#00ffff" stroke-width="6" stroke-linejoin="round" filter="url(#goo)"/>
<polygon points="602,216 655,215 680,221 683,239 650,243 602,243 601,230" fill="#ffff00" stroke="#ffff00" stroke-width="6" stroke-linejoin="round" filter="url(#goo)"/>
<polygon points="611,270 640,265 648,257 668,255 672,290 660,302.5 626,302.5 623,298" fill="#ff8000" stroke="#ff8000" stroke-width="6" stroke-linejoin="round" filter="url(#goo)"/>
<polygon points="716,157.5 755,156.5 761,163 758,180 750,192 730,197 719,168" fill="#00ff00" stroke="#00ff00" stroke-width="6" stroke-linejoin="round" filter="url(#goo)"/>
<polygon points="760,223 808,222 814,231 813,257 797,258 767,246 761,236" fill="#ff1a80" stroke="#ff1a80" stroke-width="6" stroke-linejoin="round" filter="url(#goo)"/>
<polygon points="755.5,270 790,264 811,264 814,280 811,295 801,305 788,310 760,310 754,297" fill="#ff0000" stroke="#ff0000" stroke-width="6" stroke-linejoin="round" filter="url(#goo)"/>
<polygon points="721,285.5 752,277.5 755,302 752,313.5 723,315 714.5,304" fill="#0000ff" stroke="#0000ff" stroke-width="6" stroke-linejoin="round" filter="url(#goo)"/>
<polygon points="662.5,160.5 705,157.5 715,169 722,188 732,198 712,198 691,196 676,186 662.5,166" fill="#ff00ff" stroke="#ff00ff" stroke-width="6" stroke-linejoin="round" filter="url(#goo)"/>
<polygon points="755.5,172 792,167.5 806,184 803,198 795,210 772,222 755.5,213 754,187" fill="#ff00ff" stroke="#ff00ff" stroke-width="6" stroke-linejoin="round" filter="url(#goo)"/>
<polygon points="662,209 680,206 692,206 712,204 735,203 776,218 786,224 758,226.5 730,233 706,222 690,228 662,223 660,215" fill="#ff00ff" stroke="#ff00ff" stroke-width="6" stroke-linejoin="round" filter="url(#goo)"/>
<polygon points="655,247.5 676,245 688,245 688,266 671,267 656,261" fill="#ff00ff" stroke="#ff00ff" stroke-width="6" stroke-linejoin="round" filter="url(#goo)"/>
<polygon points="723,247.5 752,245 770,253 783,263 776,271.5 752,273 726,266 719,257.5" fill="#ff00ff" stroke="#ff00ff" stroke-width="6" stroke-linejoin="round" filter="url(#goo)"/>
<polygon points="667,285.5 690,281.5 719,291 724,302 709,313.5 672,315 667,305" fill="#ff00ff" stroke="#ff00ff" stroke-width="6" stroke-linejoin="round" filter="url(#goo)"/>
<polygon points="686,229 700,229 701,250 705,266 712,280 700,283 688,281 686,250" fill="#ff00ff" stroke="#ff00ff" stroke-width="6" stroke-linejoin="round" filter="url(#goo)"/>
<g stroke="#fff" stroke-width="0.7" fill="none" opacity="0.9"><path d="M628 184 Q645 180 660 188 M630 188 Q648 186 662 194 M634 193 Q650 191 664 199"/><path d="M604 224 Q625 221 645 225 M604 228 Q625 226 648 230 M604 232 Q628 230 650 235 M606 236 Q630 235 652 239"/><path d="M615 278 Q630 274 645 277 M617 285 Q632 281 648 286 M622 295 Q636 292 650 296"/><path d="M770 232 Q790 230 812 233 M772 238 Q792 236 813 240 M774 244 Q794 243 812 247"/><path d="M772 282 Q780 290 782 300 M776 280 Q784 288 786 298 M780 278 Q788 286 790 296"/><path d="M676 164 Q690 162 704 166"/></g>
<ellipse cx="782" cy="236" rx="10" ry="8" fill="#fff"/><path d="M776 229 L791 230 M774 233 L792 234 M774 237 L792 238 M775 241 L791 242" stroke="#ff70c0" stroke-width="0.6"/>
<path d="M694 198 L709 198 L707 205 L695 205 Z" fill="#fff"/>
<path d="M690 250 L702 249 M689 256 L703 255 M690 262 L704 261" stroke="#fff" stroke-width="1.2"/>
<path d="M676 270 L692 270 L690 275 L676 275 Z" fill="#fff"/>
<line x1="596" y1="160" x2="596" y2="322" stroke="#2fbf2f" stroke-width="0.8" stroke-dasharray="1.5 1.5"/>
</svg>
</div>
<div class="cb" style="left:327.7px;top:469.5px"><svg class="ck" width="6" height="6" viewBox="0 0 6 6"><path d="M0.8 3.2 L2.2 4.8 L5.2 1" stroke="#222" stroke-width="1.2" fill="none"/></svg></div>
<div class="a b" style="left:336.3px;top:468.5px">Show Model</div>
<div class="cb" style="left:501.2px;top:469.5px"><svg class="ck" width="6" height="6" viewBox="0 0 6 6"><path d="M0.8 3.2 L2.2 4.8 L5.2 1" stroke="#222" stroke-width="1.2" fill="none"/></svg></div>
<div class="a b" style="left:510.3px;top:468.5px">Show Tracings</div>
<div class="cb" style="left:675px;top:469.5px"></div>
<div class="a b" style="left:683.7px;top:468.5px">Show Velocity</div>
<div class="cb" style="left:849.2px;top:469.5px"><svg class="ck" width="6" height="6" viewBox="0 0 6 6"><path d="M0.8 3.2 L2.2 4.8 L5.2 1" stroke="#222" stroke-width="1.2" fill="none"/></svg></div>
<div class="a b" style="left:858px;top:468.5px">Show one particle</div>

<div class="grp" style="left:324px;top:486px;width:698px;height:31px"></div>
<div class="gt" style="left:325.5px;top:482px">One particle simulation :</div>
<div class="a b" style="left:325px;top:495.8px">Particle x:</div>
<div class="tf" style="left:355.8px;top:493px;width:75px;height:12.7px"></div>
<div class="a b" style="left:431.3px;top:495.8px">y :</div>
<div class="tf" style="left:437.9px;top:493px;width:74.5px;height:12.7px"></div>
<div class="a b" style="left:513.4px;top:495.8px">Z :</div>
<div class="tf" style="left:520.4px;top:493px;width:75px;height:12.7px"></div>
<div class="a b" style="left:596.5px;top:495.8px">Timing :</div>
<div class="tf" style="left:619.5px;top:493px;width:79px;height:12.7px;line-height:11px;padding-left:1px">5</div>
<div class="a b" style="left:699px;top:495.8px">Distance between Points:</div>
<div class="tf" style="left:776.4px;top:493px;width:78.3px;height:12.7px;line-height:11px;padding-left:1px">1</div>
<div class="a b" style="left:855.7px;top:495.8px">Backward sim. :</div>
<div class="cb" style="left:906.2px;top:496px"></div>
<div class="btn" style="left:915px;top:493.3px;width:66.5px;height:13.3px;line-height:11.3px">Start simulation</div>
<div class="btn" style="left:981px;top:493.3px;width:38px;height:13.3px;line-height:11.3px">Export</div>
<div class="a b" style="left:654.7px;top:507px">Information:</div>

<div class="grp" style="left:324px;top:522.4px;width:347.5px;height:101.5px"></div>
<div class="gt" style="left:325.5px;top:518.5px">Info</div>
<div class="a" style="left:325.3px;top:529.5px;width:344.7px;height:91.3px;background:#fff;border:1px solid #a4b2c0;border-bottom-color:#c8d0d8;border-right-color:#c8d0d8"></div>
<div class="a r" style="left:326px;top:531.2px;line-height:8.38px;font-size:6.55px;color:#333">Import time (sec)= 56.08<br>Create tracings<br>Tracings total: 4496Tracings finished: 4052Time (sec):10.641<br>Imported Results<br>Create tracings<br>Tracings total: 8846Tracings finished: 8197Time (sec):49.626</div>
<div class="a b" style="left:673px;top:521.5px;line-height:8px">Root Mean Squared Error</div>
<div class="a b" style="left:673px;top:536.5px;line-height:8px">Area of error</div>
<div class="a b" style="left:673px;top:551.5px;line-height:8px">Seam weld quality</div>
<div class="a b" style="left:673px;top:566.5px;line-height:8px">Seam weld quality (donati)</div>
<div class="a b" style="left:673px;top:581.5px;line-height:8px">Reinforcement stress</div>
<div class="a b" style="left:673px;top:596.5px;line-height:8px">Model element error (total)</div>
<div class="a b" style="left:673px;top:611.5px;line-height:8px">Model element warnings (%)</div>
<div class="a" style="left:1023px;top:23px;width:1px;height:601px;background:#f4f4f4"></div>
</div>

<!-- TASKBAR -->
<div class="a" style="left:0;top:624px;width:1024px;height:16px;background:#d4d0c8;border-top:1.2px solid #f6f6f4"></div>
<div class="a" style="left:1px;top:626.5px;width:28px;height:12.3px;background:#d4d0c8;border:1px solid;border-color:#fff #404040 #404040 #fff;box-shadow:inset -1px -1px #808080"></div>
<svg class="a" style="left:3px;top:628.3px" width="8" height="8" viewBox="0 0 8 8"><path d="M0.5 1.2 Q2 0.3 3.6 1 L3.3 3.8 Q1.8 3.2 0.2 3.9 Z" fill="#e8502a"/><path d="M4.1 1.1 Q5.8 1.8 7.6 1 L7.3 3.9 Q5.5 4.6 3.8 3.9 Z" fill="#5aaa28"/><path d="M0.1 4.3 Q1.7 3.6 3.2 4.3 L2.9 7 Q1.4 6.4 -0.2 7 Z" fill="#2a7ad8"/><path d="M3.7 4.3 Q5.4 5 7.2 4.3 L6.9 7.2 Q5.1 7.9 3.4 7.2 Z" fill="#f4c81a"/></svg>
<div class="a" style="left:11.8px;top:628.3px;font-weight:bold;font-size:6.4px;line-height:9px;color:#111">Start</div>
<div class="a" style="left:32px;top:627px;width:2px;height:11px;border-left:1px solid #fff;border-right:1px solid #9a9a9a"></div>
<svg class="a" style="left:37.5px;top:628.5px" width="8" height="8" viewBox="0 0 8 8"><rect x="0.5" y="0.8" width="7" height="6.8" rx="1.2" fill="#3a82d8"/><rect x="2" y="2" width="4" height="4" rx="0.5" fill="#cfe6ff"/><circle cx="7" cy="2" r="1" fill="#e8502a"/></svg>
<svg class="a" style="left:50.2px;top:628.5px" width="8" height="8" viewBox="0 0 8 8"><rect x="0.5" y="0.8" width="7" height="6.8" rx="1.5" fill="#f3d39a"/><path d="M1.8 3.5 L4 5.5 L6.2 3.5" stroke="#c8801a" stroke-width="1" fill="none"/></svg>
<svg class="a" style="left:62.4px;top:628.5px" width="8" height="8" viewBox="0 0 8 8"><circle cx="4" cy="4" r="3.7" fill="#1e4f9a"/><path d="M1.5 5 L4 2.8 L6.8 6" stroke="#e03030" stroke-width="1.2" fill="none"/><path d="M1.2 6 L3.5 4.2" stroke="#2aa02a" stroke-width="1.2"/></svg>
<svg class="a" style="left:74.6px;top:628.5px" width="8" height="8" viewBox="0 0 8 8"><circle cx="4" cy="4" r="3.7" fill="#2a62b8"/><circle cx="4" cy="3.5" r="1.6" fill="#9ac0ee"/><rect x="2" y="5" width="4" height="2" fill="#b8d4f4"/></svg>
<svg class="a" style="left:86.8px;top:628.5px" width="8" height="8" viewBox="0 0 8 8"><circle cx="4" cy="4" r="3.7" fill="#db4437"/><path d="M4 4 L7.7 4 A3.7 3.7 0 0 1 2.1 7.2 Z" fill="#f4c20d"/><path d="M4 4 L2.1 7.2 A3.7 3.7 0 0 1 0.8 2.2 Z" fill="#0f9d58"/><circle cx="4" cy="4" r="1.8" fill="#fff"/><circle cx="4" cy="4" r="1.3" fill="#4285f4"/></svg>
<div class="a" style="left:103.5px;top:626.5px;font-size:8px;line-height:8px;font-weight:bold;color:#111">»</div>
<div class="a" style="left:112px;top:627px;width:2px;height:11px;border-left:1px solid #fff;border-right:1px solid #9a9a9a"></div>
<div class="tb" style="left:115.1px;width:57.0px"><svg class="ic" viewBox="0 0 8 8"><rect x="1" y="0.5" width="6.5" height="7" fill="#fff" stroke="#7a8fb0" stroke-width="0.6"/><rect x="0" y="1" width="4.5" height="3.5" fill="#d41a1a"/><path d="M1 3.5 L2.2 1.8 L3.5 3.4" stroke="#fff" stroke-width="0.6" fill="none"/></svg><span>ISPT_Firmenp...</span></div>
<div class="tb" style="left:174.7px;width:57.60000000000002px"><svg class="ic" viewBox="0 0 8 8"><rect x="1" y="0.5" width="6.5" height="7" fill="#fff" stroke="#7a8fb0" stroke-width="0.6"/><rect x="0" y="1" width="4.5" height="3.5" fill="#d41a1a"/><path d="M1 3.5 L2.2 1.8 L3.5 3.4" stroke="#fff" stroke-width="0.6" fill="none"/></svg><span>Optimierung_...</span></div>
<div class="tb" style="left:234.6px;width:57.70000000000002px"><svg class="ic" viewBox="0 0 8 8"><rect x="1" y="0.5" width="6.5" height="7" fill="#fff" stroke="#7a8fb0" stroke-width="0.6"/><rect x="0" y="1" width="4.5" height="3.5" fill="#d41a1a"/><path d="M1 3.5 L2.2 1.8 L3.5 3.4" stroke="#fff" stroke-width="0.6" fill="none"/></svg><span>Rechnergestü...</span></div>
<div class="tb" style="left:294.4px;width:57.10000000000002px"><svg class="ic" viewBox="0 0 8 8"><rect x="1" y="0.5" width="6.5" height="7" fill="#fff" stroke="#7a8fb0" stroke-width="0.6"/><rect x="0" y="1" width="4.5" height="3.5" fill="#d41a1a"/><path d="M1 3.5 L2.2 1.8 L3.5 3.4" stroke="#fff" stroke-width="0.6" fill="none"/></svg><span>Jahrestagung...</span></div>
<div class="tb" style="left:354.5px;width:56.19999999999999px"><svg class="ic" viewBox="0 0 8 8"><rect x="1" y="0.5" width="6.5" height="7" fill="#fff" stroke="#7a8fb0" stroke-width="0.6"/><rect x="0" y="1" width="4.5" height="3.5" fill="#d41a1a"/><path d="M1 3.5 L2.2 1.8 L3.5 3.4" stroke="#fff" stroke-width="0.6" fill="none"/></svg><span>03_UFT_Plasti...</span></div>
<div class="tb" style="left:413.6px;width:57.39999999999998px"><svg class="ic" viewBox="0 0 8 8"><path d="M0.5 2 L3 2 L3.8 1 L7.5 1 L7.5 7 L0.5 7 Z" fill="#f1cf5a" stroke="#b38a1e" stroke-width="0.5"/><rect x="0.5" y="3" width="7" height="4" fill="#f9de7c" stroke="#b38a1e" stroke-width="0.4"/></svg><span>Projekte</span></div>
<div class="tb" style="left:474px;width:56.799999999999955px"><svg class="ic" viewBox="0 0 8 8"><path d="M0.5 2 L3 2 L3.8 1 L7.5 1 L7.5 7 L0.5 7 Z" fill="#f1cf5a" stroke="#b38a1e" stroke-width="0.5"/><rect x="0.5" y="3" width="7" height="4" fill="#f9de7c" stroke="#b38a1e" stroke-width="0.4"/></svg><span>Audi_Testrech...</span></div>
<div class="tb" style="left:533.2px;width:55.69999999999993px"><svg class="ic" viewBox="0 0 8 8"><rect x="1" y="0.5" width="6.5" height="7" fill="#fff" stroke="#7a8fb0" stroke-width="0.6"/><rect x="0" y="1" width="4.5" height="3.5" fill="#d41a1a"/><path d="M1 3.5 L2.2 1.8 L3.5 3.4" stroke="#fff" stroke-width="0.6" fill="none"/></svg><span>TT-Roadstar....</span></div>
<div class="tb" style="left:593.5px;width:56.60000000000002px"><svg class="ic" viewBox="0 0 8 8"><path d="M0.5 2 L3 2 L3.8 1 L7.5 1 L7.5 7 L0.5 7 Z" fill="#f1cf5a" stroke="#b38a1e" stroke-width="0.5"/><rect x="0.5" y="3" width="7" height="4" fill="#f9de7c" stroke="#b38a1e" stroke-width="0.4"/></svg><span>SeamWeldAna...</span></div>
<div class="tb" style="left:653.1px;width:56.60000000000002px"><svg class="ic" viewBox="0 0 8 8"><rect x="0.3" y="1" width="7.4" height="6" fill="#000" stroke="#1a3a8a" stroke-width="0.7"/><rect x="0.3" y="0.8" width="7.4" height="1.3" fill="#2a5bd0"/><text x="1" y="6" font-size="3.5" fill="#ccc" font-family="Liberation Mono">C:\</text></svg><span>C:\WINDOWS...</span></div>
<div class="tb" style="left:712.8px;width:56.90000000000009px"><svg class="ic" viewBox="0 0 8 8"><rect x="0.3" y="1" width="7.4" height="6" fill="#000" stroke="#1a3a8a" stroke-width="0.7"/><rect x="0.3" y="0.8" width="7.4" height="1.3" fill="#2a5bd0"/><text x="1" y="6" font-size="3.5" fill="#ccc" font-family="Liberation Mono">C:\</text></svg><span>C:\WINDOWS...</span></div>
<div class="tb" style="left:772px;width:57.60000000000002px"><svg class="ic" viewBox="0 0 8 8"><rect x="0.3" y="0.3" width="7.4" height="7.4" fill="#e8eef5" stroke="#9ab" stroke-width="0.5"/><path d="M4 1 Q5.5 2.5 3.8 4 Q3 4.8 4.2 5" stroke="#e8862a" stroke-width="1.1" fill="none"/><rect x="1.5" y="5.5" width="5" height="1.3" fill="#5a8ac0"/></svg><span>Seam Weld An...</span></div>
<div class="tb" style="left:831.7px;width:57.59999999999991px;border-color:#404040 #fff #fff #404040;background:#e8e6e1;font-weight:bold"><svg class="ic" viewBox="0 0 8 8"><rect x="0.3" y="0.3" width="7.4" height="7.4" fill="#e8eef5" stroke="#9ab" stroke-width="0.5"/><path d="M4 1 Q5.5 2.5 3.8 4 Q3 4.8 4.2 5" stroke="#e8862a" stroke-width="1.1" fill="none"/><rect x="1.5" y="5.5" width="5" height="1.3" fill="#5a8ac0"/></svg><span>Seam Weld ...</span></div>
<div class="a" style="left:894px;top:626.8px;width:128px;height:11.5px;border:1px solid;border-color:#808080 #fff #fff #808080"></div>
<svg class="a" style="left:0;top:0" width="1024" height="640" viewBox="0 0 1024 640"><rect x="896.5" y="629" width="6.5" height="7" fill="#0a6a0a" stroke="#043a04" stroke-width="0.5"/><path d="M905 628.3 L912.5 628.3 L912.5 633 Q908.8 637.8 905 633 Z" fill="#f0d020" stroke="#8a8aa8" stroke-width="0.8"/><rect x="908" y="630.5" width="1.6" height="3" fill="#806000"/><circle cx="918.3" cy="632.5" r="4.2" fill="#f5d7a8"/><path d="M915.5 632.5 Q918.3 635.5 921 632.5" stroke="#d09040" stroke-width="0.9" fill="none"/><circle cx="929.8" cy="631" r="2.6" fill="#cfe4ff" stroke="#2a6ae0" stroke-width="1.1"/><line x1="927.8" y1="633.2" x2="925" y2="636.5" stroke="#2a6ae0" stroke-width="1.5"/><circle cx="938" cy="632.5" r="4.3" fill="#4a4aa8"/><circle cx="938" cy="632.5" r="2.5" fill="#fff"/><circle cx="938" cy="632.5" r="1" fill="#4a4aa8"/><path d="M943.5 633.5 L949 628.3 L952.5 632 L947 637 Z" fill="#f4e800" stroke="#5a5a00" stroke-width="0.6"/><path d="M953.8 630.5 L956.3 630.5 L960 627.8 L960 637.2 L956.3 634.5 L953.8 634.5 Z" fill="#d84a20"/><path d="M961 630 Q962.5 632.5 961 635" stroke="#666" stroke-width="0.7" fill="none"/><path d="M963 632.5 L971.5 628.5 L969.8 632.5 L971.5 636.5 Z" fill="#e8e870"/><circle cx="976.3" cy="631.8" r="3.6" fill="#6a7080"/><path d="M977 634 L981 637" stroke="#8888d8" stroke-width="1.2"/><path d="M982.5 628 L990 628 L990 633.5 Q986.2 638.2 982.5 633.5 Z" fill="#e4bc5c" stroke="#9a7a3a" stroke-width="0.6"/><path d="M991.5 631 Q995 628 1000.5 629.5 L1000.5 636 L993 636 Q991 634 991.5 631 Z" fill="#62c040"/><ellipse cx="996" cy="632.5" rx="2.2" ry="1.4" fill="none" stroke="#c8f0b0" stroke-width="0.6"/></svg>
<div class="a" style="left:1003.5px;top:628.5px;font-size:6.2px;line-height:8px;color:#111">07:45</div>

</div></body></html>
